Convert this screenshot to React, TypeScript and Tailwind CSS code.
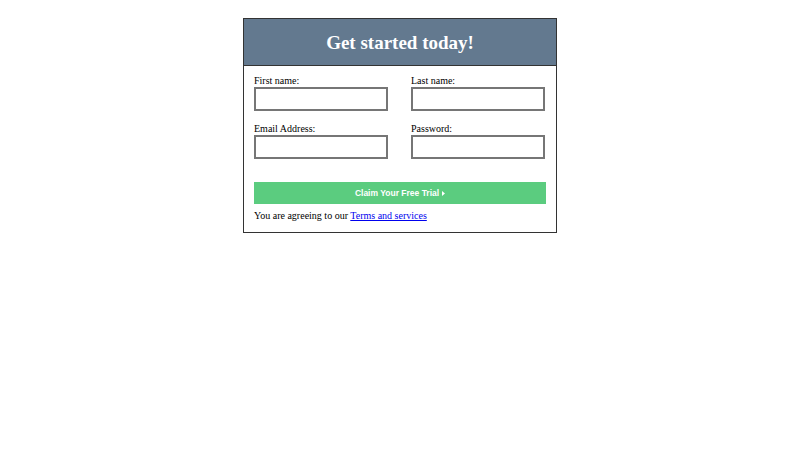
export default function App() {
  const fields = [
    { label: "First name:", type: "text" },
    { label: "Last name:", type: "text" },
    { label: "Email Address:", type: "email" },
    { label: "Password:", type: "password" },
  ];

  return (
    <div className="min-h-[450px] w-full bg-white pt-[18px] font-['Liberation_Serif',serif] text-[10px] leading-[12px] text-black">
      <div className="mx-auto w-[314px] border border-[#333333]">
        <div className="flex h-[47px] items-center justify-center border-b border-[#333333] bg-[#63798f]">
          <h1 className="text-[19px] font-bold leading-none text-white">Get started today!</h1>
        </div>
        <form className="px-[10px] pb-[10px] pt-[9px]" onSubmit={(e) => e.preventDefault()}>
          <div className="grid grid-cols-[157px_1fr] gap-y-[12px]">
            {fields.map((field) => (
              <label className="flex flex-col" key={field.label}>
                <span>{field.label}</span>
                <input
                  className="h-[24px] w-[134px] border-2 border-[#767676] bg-white px-1 outline-none"
                  type={field.type}
                />
              </label>
            ))}
          </div>
          <button
            className="mt-[23px] flex h-[22px] w-full items-center justify-center gap-[3px] bg-[#5bcc7f] font-['Liberation_Sans',sans-serif] text-[8.5px] font-bold text-white"
            type="submit"
          >
            Claim Your Free Trial
            <svg aria-hidden="true" className="h-[5px] w-[3px]" viewBox="0 0 3 5">
              <path d="M0 0 L3 2.5 L0 5 Z" fill="white" />
            </svg>
          </button>
          <p className="mt-[6px]">
            You are agreeing to our{" "}
            <a className="text-[#0000ee] underline" href="#">
              Terms and services
            </a>
          </p>
        </form>
      </div>
    </div>
  );
}
